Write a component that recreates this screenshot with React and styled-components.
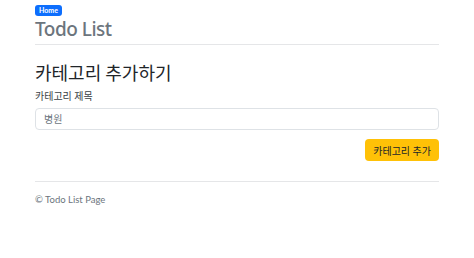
import React, { useState } from 'react'
import styled, { createGlobalStyle } from 'styled-components'

const GlobalStyle = createGlobalStyle`
    body {
        margin: 0;
        background-color: #fff;
        font-family: Lato, "Noto Sans CJK KR", sans-serif;
        color: #212529;
    }
`

const App = () => {
    const [title, setTitle] = useState('')

    return (
        <>
            <GlobalStyle />
            <Wrapper>
                <Header>
                    <Badge>Home</Badge>
                    <PageTitle>Todo List</PageTitle>
                </Header>
                <Main>
                    <Heading>카테고리 추가하기</Heading>
                    <Label htmlFor="category">카테고리 제목</Label>
                    <Input
                        id="category"
                        placeholder="병원"
                        value={title}
                        onChange={e => setTitle(e.target.value)}
                    />
                    <Actions>
                        <AddButton>카테고리 추가</AddButton>
                    </Actions>
                </Main>
                <Footer>© Todo List Page</Footer>
            </Wrapper>
        </>
    )
}

export default App

const Wrapper = styled.div`
    padding: 0 35px;
`

const Header = styled.header`
    display: flex;
    flex-direction: column;
    align-items: flex-start;
    padding-top: 5px;
    padding-bottom: 2px;
    border-bottom: 1px solid #e5e6e8;
`

const Badge = styled.span`
    background-color: #0d6efd;
    color: #fff;
    font-size: 7px;
    font-weight: 700;
    line-height: 11px;
    padding: 0 4px;
    border-radius: 3px;
`

const PageTitle = styled.h1`
    margin: 0;
    font-family: "Noto Sans", sans-serif;
    font-size: 19px;
    font-weight: 500;
    letter-spacing: -0.5px;
    line-height: 26px;
    color: #6c757d;
`

const Main = styled.main`
    display: flex;
    flex-direction: column;
    padding-top: 15px;
    padding-bottom: 20px;
    border-bottom: 1px solid #e5e6e8;
`

const Heading = styled.h2`
    margin: 0 0 5px;
    font-family: "Noto Sans CJK KR", sans-serif;
    font-size: 18px;
    font-weight: 400;
    line-height: 24px;
`

const Label = styled.label`
    font-size: 10px;
    line-height: 14px;
    margin-bottom: 5px;
    color: #3a3f44;
`

const Input = styled.input`
    height: 22px;
    box-sizing: border-box;
    border: 1px solid #dee2e6;
    border-radius: 4px;
    padding: 0 8px;
    font-family: inherit;
    font-size: 10px;
    outline: none;

    &::placeholder {
        color: #6c757d;
    }
`

const Actions = styled.div`
    display: flex;
    justify-content: flex-end;
    margin-top: 9px;
`

const AddButton = styled.button`
    background-color: #ffc107;
    border: none;
    border-radius: 4px;
    height: 22px;
    padding: 0 8px;
    font-family: inherit;
    font-size: 10px;
    color: #212529;
`

const Footer = styled.footer`
    padding-top: 11px;
    font-size: 9.5px;
    line-height: 14px;
    color: #6c757d;
`
